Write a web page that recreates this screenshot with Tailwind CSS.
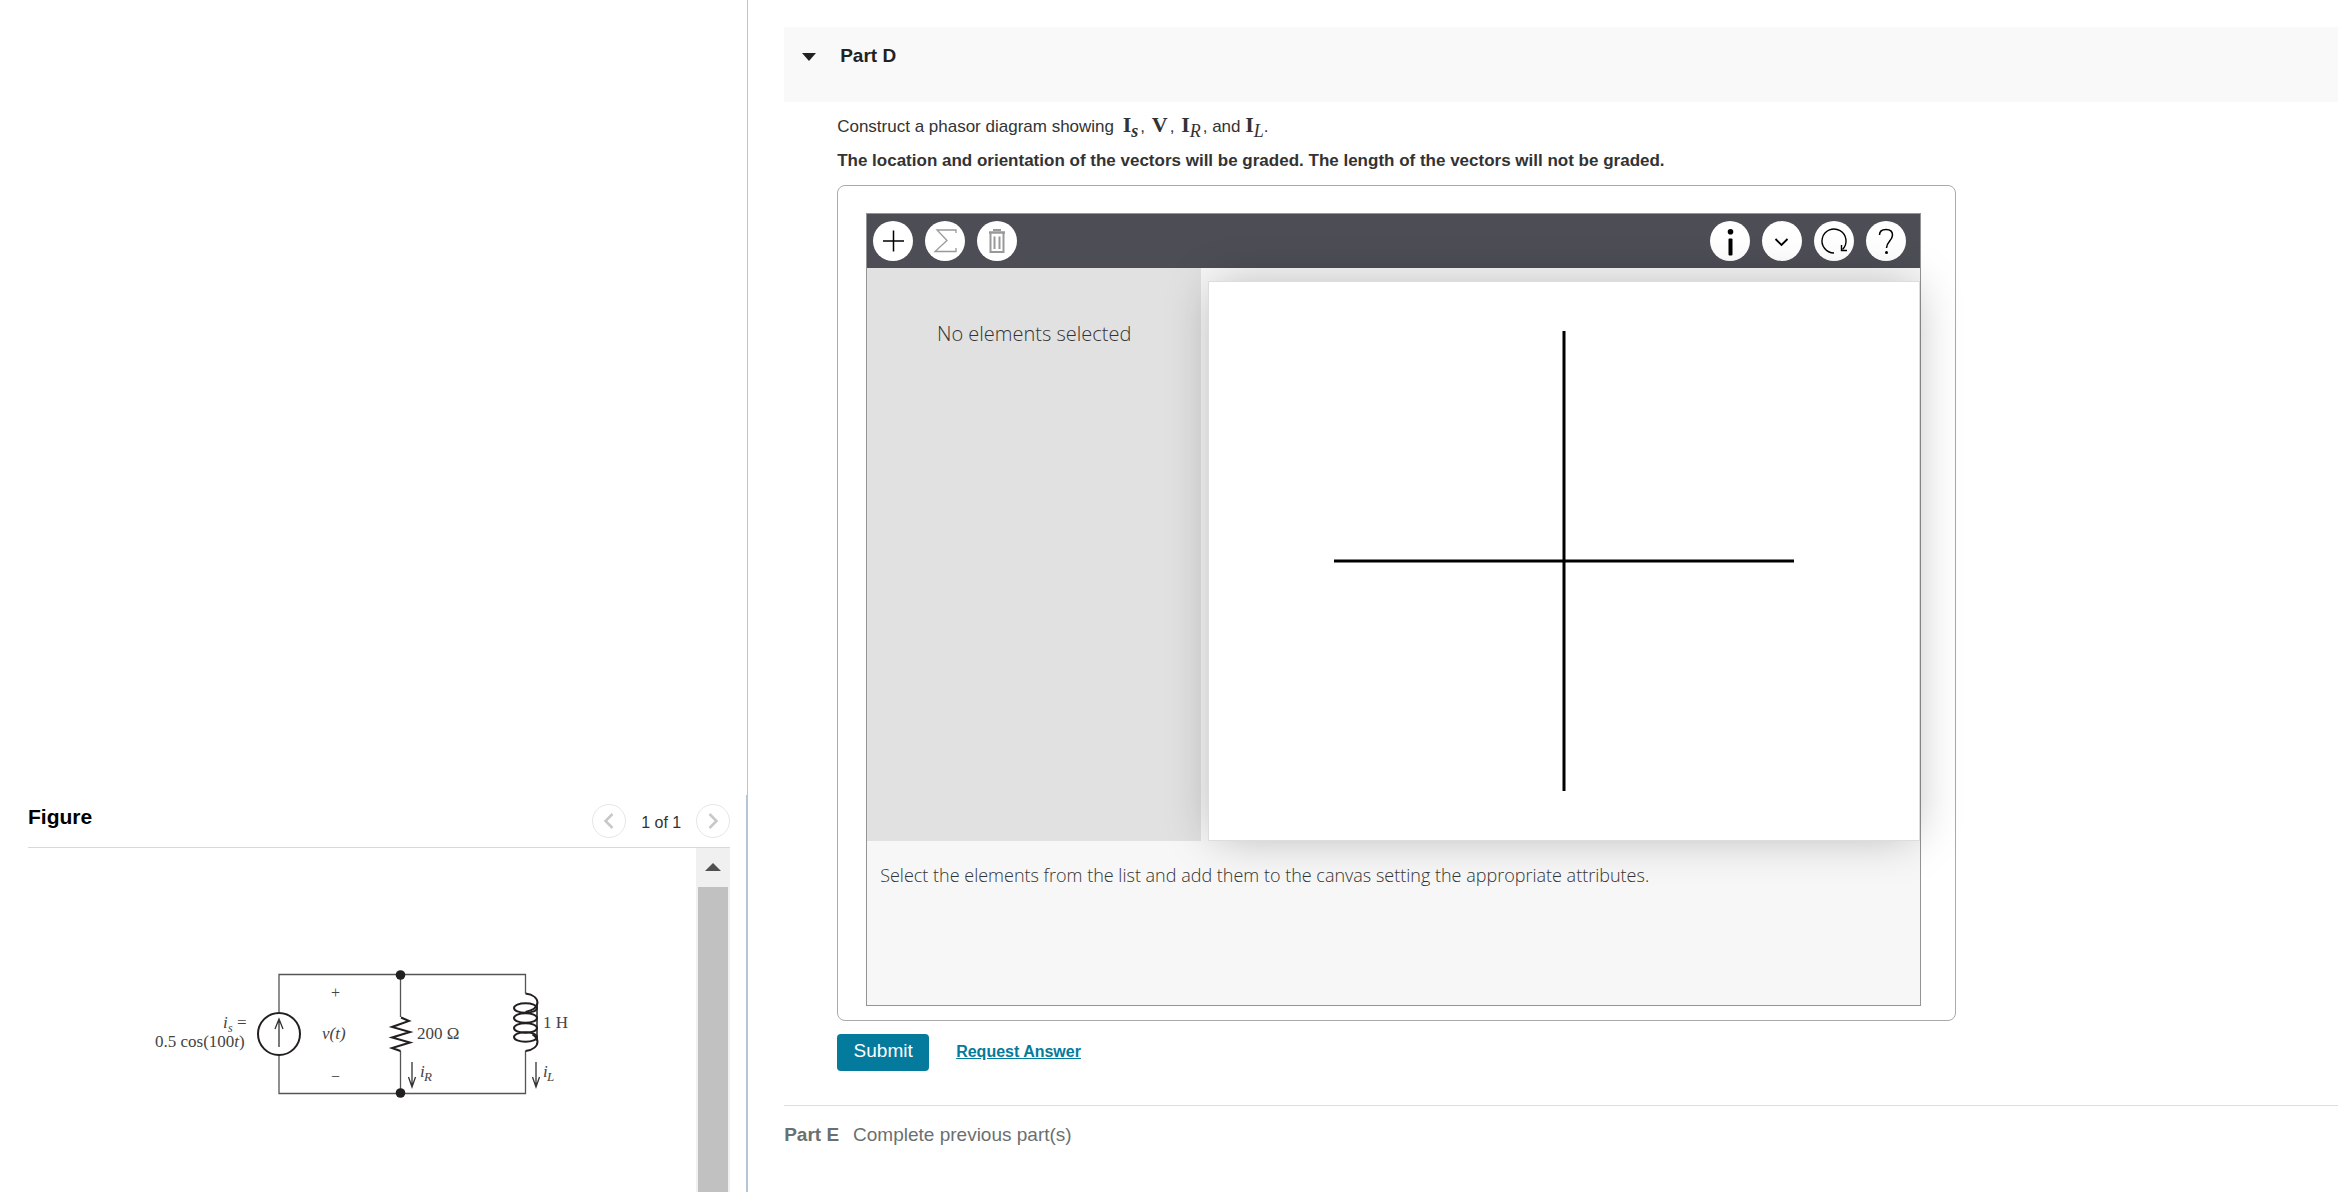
<!DOCTYPE html>
<html lang="en">
  <head>
    <meta charset="UTF-8" />
    <meta name="viewport" content="width=device-width, initial-scale=1.0" />
    <title>Part D - Phasor diagram</title>
    <script src="https://cdn.jsdelivr.net/npm/@tailwindcss/browser@4"></script>
  </head>
  <body class="flex h-screen overflow-hidden bg-white font-['Liberation_Sans',Arial,sans-serif] text-[#333]">
    <!-- FIGURE PANEL -->
    <aside class="flex w-[32%] shrink-0 flex-col border-r border-[#b4c6d6]">
      <div class="basis-2/3"></div>
      <section class="flex min-h-0 basis-1/3 flex-col border-r border-[#b4c6d6] pr-4 pl-7">
        <div class="flex h-[53px] shrink-0 items-center justify-between border-b border-[#d9d9d9]">
          <h2 class="pb-2 text-[21px] leading-6 font-bold text-black">Figure</h2>
          <div class="flex items-center">
            <button
              aria-label="Previous figure"
              class="flex size-[34px] items-center justify-center rounded-full border border-[#e6e6e6]"
            >
              <svg class="size-4" viewBox="0 0 16 16" fill="none" stroke="#c8c8c8" stroke-width="2.5">
                <path d="M11.5 1 4.5 8l7 7" />
              </svg>
            </button>
            <span class="w-[70px] pt-1 text-center text-base">1 of 1</span>
            <button
              aria-label="Next figure"
              class="flex size-[34px] items-center justify-center rounded-full border border-[#e6e6e6]"
            >
              <svg class="size-4" viewBox="0 0 16 16" fill="none" stroke="#c8c8c8" stroke-width="2.5">
                <path d="M4.5 1l7 7-7 7" />
              </svg>
            </button>
          </div>
        </div>

        <div class="flex min-h-0 flex-1 justify-between">
          <div class="pt-[102px] pl-28">
            <svg
              class="h-[170px] w-[450px] font-['Liberation_Serif',serif]"
              viewBox="0 0 450 170"
              fill="none"
              role="img"
              aria-label="Parallel RL circuit with a current source"
            >
              <!-- wires -->
              <g stroke="#555" stroke-width="1.3">
                <path d="M139 62V24.5H385.5V43.5" />
                <path d="M139 105V143.5H385.5V101" />
                <path d="M260.5 24V67M260.5 101V143" />
              </g>
              <circle cx="260.5" cy="25" r="4.8" fill="#231f20" />
              <circle cx="260.5" cy="143" r="4.8" fill="#231f20" />

              <!-- current source -->
              <circle cx="139" cy="84" r="21" stroke="#231f20" stroke-width="2" />
              <g stroke="#333" stroke-width="1.3">
                <path d="M139 97V70M135 79l4-10 4 10" />
                <path d="M272 112v25M268.5 127l3.5 10 3.5-10" />
                <path d="M396 112v25M392.5 127l3.5 10 3.5-10" />
              </g>

              <!-- resistor -->
              <path
                d="M261 67.5l8 3.5-17 6 18 5-18 5.500 18 5-18 5.500 8.500 3"
                stroke="#231f20"
                stroke-width="2"
              />

              <!-- inductor -->
              <g stroke="#231f20" stroke-width="2">
                <path d="M385.5 43.5c8 1 12 5 12 9.500 0 4-4 7-12 9" />
                <path d="M385.5 101c8-1 12-5 12-9.500 0-3-2-5-5-7" />
                <ellipse cx="385.5" cy="58" rx="11.5" ry="4.8" />
                <ellipse cx="385.5" cy="68" rx="11.5" ry="4.8" />
                <ellipse cx="385.5" cy="78" rx="11.5" ry="4.8" />
                <ellipse cx="385.5" cy="87" rx="11.5" ry="4.8" />
                <path d="M397 53v38" stroke-width="1.5" />
              </g>

              <g fill="#444" font-size="17">
                <text x="83" y="78" font-style="italic">i</text>
                <text x="88" y="82" font-size="12" font-style="italic">s</text>
                <text x="97" y="78">=</text>
                <text x="15" y="97">0.5 cos(100<tspan font-style="italic">t</tspan>)</text>
                <text x="191" y="48" font-size="16">+</text>
                <text x="191" y="132" font-size="16">−</text>
                <text x="182" y="89" font-style="italic">v(t)</text>
                <text x="277" y="89">200 Ω</text>
                <text x="403" y="78">1 H</text>
                <text x="280" y="127" font-style="italic">i</text>
                <text x="284" y="131" font-size="13" font-style="italic">R</text>
                <text x="403" y="127" font-style="italic">i</text>
                <text x="407" y="131" font-size="13" font-style="italic">L</text>
              </g>
            </svg>
          </div>
          <!-- scroll bar -->
          <div class="flex w-[34px] shrink-0 flex-col bg-[#f0f0f0]">
            <button aria-label="Scroll up" class="flex h-[39px] shrink-0 items-center justify-center">
              <svg class="h-2 w-4" viewBox="0 0 16 8" fill="#505050"><path d="M8 0l8 8H0z" /></svg>
            </button>
            <div class="mx-[2px] flex-1 bg-[#c1c1c1]"></div>
          </div>
        </div>
      </section>
    </aside>

    <!-- PROBLEM PANEL -->
    <main class="min-w-0 flex-1 pt-[27px] pl-9">
      <header class="flex h-[75px] bg-[#f9f9f9] pt-[17px]">
        <button aria-expanded="true" class="flex items-start gap-6 pl-[18px] text-left">
          <svg class="mt-[9px] h-2 w-[14px]" viewBox="0 0 14 8" fill="#222"><path d="M0 0h14L7 8z" /></svg>
          <span class="text-[19px] leading-6 font-bold text-[#222]">Part D</span>
        </button>
      </header>

      <div class="pl-[53px]">
        <p class="pt-[11px] text-[17px] leading-7">
          Construct a phasor diagram showing
          <span class="ml-1 font-['Liberation_Serif',serif] text-[22px] leading-none font-bold">I</span><sub class="bottom-[-5px] mr-[2px] font-['Liberation_Serif',serif] text-[18px] font-bold italic">s</sub>,
          <span class="mx-[2px] font-['Liberation_Serif',serif] text-[22px] leading-none font-bold">V</span>,
          <span class="ml-[2px] font-['Liberation_Serif',serif] text-[22px] leading-none font-bold">I</span><sub class="bottom-[-5px] mr-[2px] font-['Liberation_Serif',serif] text-[18px] italic">R</sub>, and
          <span class="font-['Liberation_Serif',serif] text-[22px] leading-none font-bold">I</span><sub class="bottom-[-5px] font-['Liberation_Serif',serif] text-[18px] italic">L</sub>.
        </p>
        <p class="pt-2 text-[17px] leading-6 font-bold">
          The location and orientation of the vectors will be graded. The length of the vectors will not be graded.
        </p>

        <div class="mt-3 max-w-[1119px] rounded-lg border border-[#aaa] px-7 pt-[27px] pb-[14px]">
          <div class="mr-[6px] border border-[#949494] bg-[#f7f7f7] font-['Open_Sans','Noto_Sans',sans-serif] font-light">
            <!-- toolbar -->
            <div class="flex h-[54px] items-center justify-between bg-[#4d4d56] pr-[14px] pl-[6px]">
              <div class="flex gap-3">
                <button aria-label="Add element" class="size-10 rounded-full bg-white">
                  <svg viewBox="0 0 40 40" fill="none" stroke="#000" stroke-width="1.5">
                    <path d="M20.5 9.5v21M10 20h21" />
                  </svg>
                </button>
                <button aria-label="Sum" class="size-10 rounded-full bg-white">
                  <svg viewBox="0 0 40 40" fill="none" stroke="#999" stroke-width="1.3">
                    <path d="M31 12V9H12l10 10.5L10 30.5h21V27" />
                  </svg>
                </button>
                <button aria-label="Delete" class="size-10 rounded-full bg-white">
                  <svg viewBox="0 0 40 40" fill="none" stroke="#999">
                    <path d="M13.5 12v19h13V12" stroke-width="2" />
                    <path d="M12 11.5h16" stroke-width="2.5" />
                    <path d="M17 10V9h6v1" stroke-width="2" />
                    <path d="M17.5 15.5v12.5M22.5 15.5v12.5" stroke-width="2" />
                  </svg>
                </button>
              </div>
              <div class="flex gap-3">
                <button aria-label="Information" class="size-10 rounded-full bg-white">
                  <svg viewBox="0 0 40 40">
                    <circle cx="20.5" cy="10.8" r="2.8" />
                    <rect x="18.5" y="17.5" width="4" height="17" rx="1" />
                  </svg>
                </button>
                <button aria-label="More" class="size-10 rounded-full bg-white">
                  <svg viewBox="0 0 40 40" fill="none" stroke="#000" stroke-width="1.8">
                    <path d="M13.5 18l6 6 6-6" />
                  </svg>
                </button>
                <button aria-label="Reset" class="size-10 rounded-full bg-white">
                  <svg viewBox="0 0 40 40" fill="none" stroke="#000" stroke-width="1.4">
                    <path d="M20 32A12 12 0 1 1 28.5 28.5" />
                    <path d="M27.5 24v5.5H33" />
                  </svg>
                </button>
                <button aria-label="Help" class="size-10 rounded-full bg-white">
                  <svg viewBox="0 0 40 40" fill="none" stroke="#000" stroke-width="1.5">
                    <path d="M13.5 14c0-4 3-5.5 6.5-5.5 4 0 6.5 2 6.5 5.5 0 5.5-6 6.5-6 13" />
                    <circle cx="20.5" cy="31.5" r="1.5" fill="#000" stroke="none" />
                  </svg>
                </button>
              </div>
            </div>

            <div class="flex">
              <div class="w-[334px] shrink-0 bg-[#e1e1e1] pt-[52px] text-center text-xl leading-7 text-[#333]">
                No elements selected
              </div>
              <div
                class="mt-[13px] ml-[7px] flex h-[560px] flex-1 items-center justify-center border border-[#ddd] bg-white shadow-[0_0_45px_-6px_rgba(0,0,0,0.28)]"
              >
                <svg class="size-[460px]" viewBox="0 0 460 460" stroke="#000" stroke-width="3">
                  <path d="M230 0v460M0 230h460" />
                </svg>
              </div>
            </div>

            <p class="h-[164px] px-[13px] pt-5 text-lg leading-7">
              Select the elements from the list and add them to the canvas setting the appropriate attributes.
            </p>
          </div>
        </div>

        <div class="flex items-center gap-[27px] pt-[13px]">
          <button class="h-[37px] w-[92px] rounded-sm bg-[#047a9c] pb-[2px] text-[19px] font-medium text-white">Submit</button>
          <a href="#" class="pb-[2px] text-base font-bold text-[#047a9c] underline">Request Answer</a>
        </div>
      </div>

      <div class="mt-[34px] flex gap-[14px] border-t border-[#dedede] pt-[17px] text-[19px] leading-6 text-[#6a7070]">
        <span class="font-bold">Part E</span>
        <span>Complete previous part(s)</span>
      </div>
    </main>
  </body>
</html>
